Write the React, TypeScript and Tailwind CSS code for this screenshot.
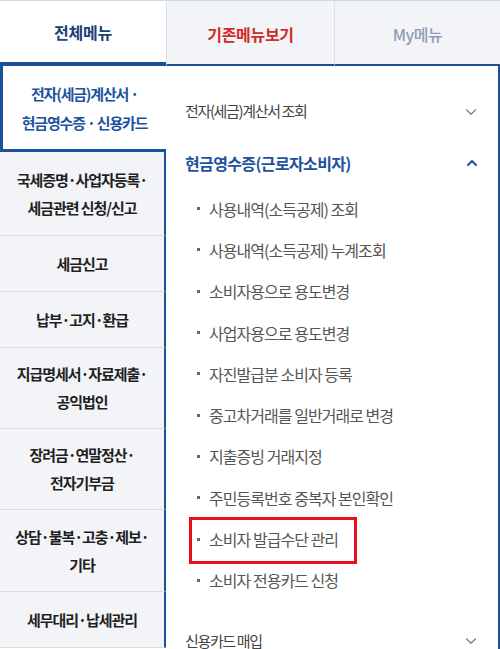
import { ChevronDown, ChevronUp } from 'lucide-react';

const leftMenus = [
  { lines: ['국세증명·사업자등록·', '세금관련 신청/신고'], h: 'h-[84px]' },
  { lines: ['세금신고'], h: 'h-[56px]' },
  { lines: ['납부·고지·환급'], h: 'h-[56px]' },
  { lines: ['지급명세서·자료제출·', '공익법인'], h: 'h-[81px]' },
  { lines: ['장려금·연말정산·', '전자기부금'], h: 'h-[81px]' },
  { lines: ['상담·불복·고충·제보·', '기타'], h: 'h-[82px]' },
  { lines: ['세무대리·납세관리'], h: 'h-[56px]' },
];

const subMenus = [
  '사용내역(소득공제) 조회',
  '사용내역(소득공제) 누계조회',
  '소비자용으로 용도변경',
  '사업자용으로 용도변경',
  '자진발급분 소비자 등록',
  '중고차거래를 일반거래로 변경',
  '지출증빙 거래지정',
  '주민등록번호 중복자 본인확인',
  '소비자 발급수단 관리',
  '소비자 전용카드 신청',
];

export default function App() {
  return (
    <div
      className="w-[500px] h-[649px] overflow-hidden bg-white"
      style={{ fontFamily: '"Noto Sans CJK KR", "Noto Sans", sans-serif' }}
    >
      {/* tabs */}
      <div className="flex h-[66px] border-t border-[#c9dcec]">
        <div className="w-[166px] flex items-center justify-center bg-white border-b-4 border-[#1c4f9c] text-[16px] font-bold text-[#1d3f7a] tracking-[-0.01em]">
          전체메뉴
        </div>
        <div className="w-[168px] flex items-center justify-center bg-[#f3f4f8] border-l border-[#dfe1e8] border-b-2 border-b-[#1c4f9c] pt-[2px] text-[16px] font-bold text-[#d22a2a] tracking-[-0.02em]">
          기존메뉴보기
        </div>
        <div className="flex-1 flex items-center justify-center bg-[#f3f4f8] border-l border-[#dfe1e8] border-b-2 border-b-[#1c4f9c] pt-[2px] text-[16px] font-medium text-[#8e9db6] tracking-[-0.03em]">
          My메뉴
        </div>
      </div>

      <div className="flex">
        {/* left column */}
        <div className="w-[166px] shrink-0 flex flex-col">
          <div className="h-[86px] bg-white border-l-[3px] border-b-[3px] border-[#1c4f9c] flex flex-col items-center justify-center text-[15px] font-bold text-[#1d52a0] leading-[29px] tracking-[-0.08em]">
            <div>전자(세금)계산서 ·</div>
            <div>현금영수증 · 신용카드</div>
          </div>
          {leftMenus.map((m, i) => (
            <div
              key={i}
              className={`${m.h} bg-[#f3f4f8] border-r-2 border-r-[#1c4f9c] border-b border-b-[#dcdee4] flex flex-col items-center justify-center text-[15px] font-bold text-[#1f1f1f] leading-[28px] tracking-[-0.07em]`}
            >
              {m.lines.map((l) => (
                <div key={l}>{l}</div>
              ))}
            </div>
          ))}
        </div>

        {/* right panel */}
        <div className="flex-1 h-[600px] bg-white border-r-2 border-[#1c4f9c] pt-[20px] pl-[19px] pr-[18px]">
          <div className="h-[51px] flex items-center justify-between text-[15px] text-[#444] tracking-[-0.09em]">
            <span>전자(세금)계산서 조회</span>
            <ChevronDown className="w-[18px] h-[18px] text-[#777]" strokeWidth={1.5} />
          </div>
          <div className="h-[51px] flex items-center justify-between text-[16px] font-bold text-[#1d52a0] tracking-[-0.04em]">
            <span>현금영수증(근로자소비자)</span>
            <ChevronUp className="w-[16px] h-[16px] text-[#1d52a0]" strokeWidth={3} />
          </div>
          <div className="flex flex-col pb-[15px]">
            {subMenus.map((s) => (
              <div key={s} className="relative h-[41.3px] flex items-center pl-[12px] text-[16px] text-[#555] tracking-[-0.06em]">
                <span className="w-[3px] h-[3px] bg-[#666] mr-[9px]" />
                <span>{s}</span>
                {s === '소비자 발급수단 관리' && (
                  <span className="absolute left-[4px] top-[-1px] w-[168px] h-[47px] border-[3px] border-[#e8101c]" />
                )}
              </div>
            ))}
          </div>
          <div className="h-[51px] flex items-center justify-between text-[15px] text-[#444] tracking-[-0.09em]">
            <span>신용카드 매입</span>
            <ChevronDown className="w-[18px] h-[18px] text-[#777]" strokeWidth={1.5} />
          </div>
        </div>
      </div>
    </div>
  );
}
